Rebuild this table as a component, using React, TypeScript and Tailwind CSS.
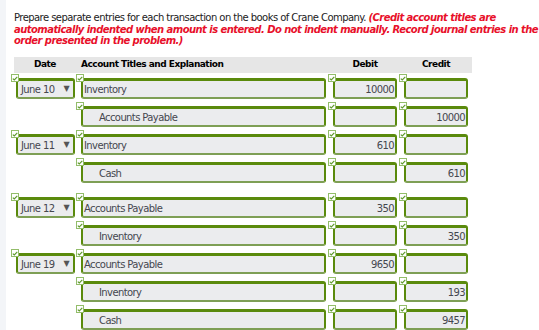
import React from "react";

type Line = { date?: string; account: string; debit?: string; credit?: string };
type Entry = { lines: Line[]; extraTop?: boolean };

const entries: Entry[] = [
  {
    lines: [
      { date: "June 10", account: "Inventory", debit: "10000" },
      { account: "Accounts Payable", credit: "10000" },
    ],
  },
  {
    lines: [
      { date: "June 11", account: "Inventory", debit: "610" },
      { account: "Cash", credit: "610" },
    ],
  },
  {
    extraTop: true,
    lines: [
      { date: "June 12", account: "Accounts Payable", debit: "350" },
      { account: "Inventory", credit: "350" },
    ],
  },
  {
    lines: [
      { date: "June 19", account: "Accounts Payable", debit: "9650" },
      { account: "Inventory", credit: "193" },
      { account: "Cash", credit: "9457" },
    ],
  },
];

const font = { fontFamily: '"DejaVu Sans", Verdana, sans-serif' };

function Check() {
  return (
    <span className="absolute -left-[5px] -top-[4px] z-10 flex h-[8px] w-[8px] items-center justify-center border border-[#93bd6a] bg-white">
      <svg width="6" height="5" viewBox="0 0 6 5">
        <path d="M0.8 2.6 L2.3 4 L5.3 0.9" fill="none" stroke="#5f9a2c" strokeWidth="1.2" />
      </svg>
    </span>
  );
}

function Field({
  width,
  children,
  align = "left",
}: {
  width: string;
  children?: React.ReactNode;
  align?: "left" | "right";
}) {
  return (
    <div className={`relative ${width}`}>
      <Check />
      <div
        className={`flex h-[21px] items-center rounded-[3px] border-x-2 border-t-[3px] border-b-2 border-x-[#5a8a0c] border-t-[#5a8a0c] border-b-[#7e9f55] bg-[#ebecee] text-[10px] tracking-[-0.6px] text-[#45474f] ${
          align === "right" ? "justify-end pr-[1px]" : "pl-[1px]"
        }`}
      >
        {children}
      </div>
    </div>
  );
}

function Row({ line, credit }: { line: Line; credit: boolean }) {
  return (
    <div className="flex h-[21px] items-start">
      <div className="ml-[2px] w-[59px]">
        {line.date ? (
          <Field width="w-[59px]">
            <span className="pl-[2px]">{line.date}</span>
            <span className="ml-auto mr-[4px] text-[8px] text-[#555]">▼</span>
          </Field>
        ) : null}
      </div>
      <div className="ml-[6px]">
        <Field width="w-[245px]">
          <span className={credit ? "pl-[15px]" : ""}>{line.account}</span>
        </Field>
      </div>
      <div className="ml-[7px]">
        <Field width="w-[64px]" align="right">
          {line.debit}
        </Field>
      </div>
      <div className="ml-[7px]">
        <Field width="w-[64px]" align="right">
          {line.credit}
        </Field>
      </div>
    </div>
  );
}

export default function App() {
  return (
    <div className="flex h-[330px] w-[539px] overflow-hidden bg-white" style={font}>
      <div className="w-[6px] shrink-0 bg-[#f3f5f8]" />
      <div className="pl-[8px] pt-[12px]">
        <p className="text-[10px] leading-[11.7px] tracking-[-0.55px] text-[#222]">
          Prepare separate entries for each transaction on the books of Crane Company.{" "}
          <span className="font-bold italic text-[#e8102a]">
            (Credit account titles are
            <br />
            automatically indented when amount is entered. Do not indent manually. Record journal entries in the
            <br />
            order presented in the problem.)
          </span>
        </p>

        <div className="mt-[10px] flex h-[16px] w-[458px] items-center bg-[#e6e6e6] text-[9px] font-bold tracking-[-0.5px] text-black">
          <div className="w-[62px] text-center">Date</div>
          <div className="w-[257px] pl-[5px]">Account Titles and Explanation</div>
          <div className="w-[64px] text-center">Debit</div>
          <div className="ml-[7px] w-[64px] text-center">Credit</div>
        </div>

        <div className="mt-[5px] flex flex-col">
          {entries.map((entry, i) => (
            <div
              key={i}
              className={`flex flex-col gap-[7px] ${i === 0 ? "" : entry.extraTop ? "mt-[14px]" : "mt-[7px]"}`}
            >
              {entry.lines.map((line, j) => (
                <Row key={j} line={line} credit={j > 0} />
              ))}
            </div>
          ))}
        </div>
      </div>
    </div>
  );
}
